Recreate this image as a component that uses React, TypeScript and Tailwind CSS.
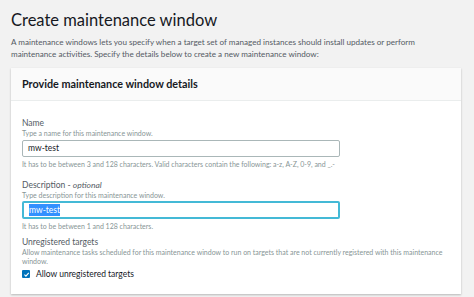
export default function App() {
  return (
    <div className="min-h-[297px] bg-[#f2f2f2] px-[11px] pt-[7px] font-['Lato',sans-serif] text-[#16191f]">
      <h1 className="text-[16.5px] leading-[26px]">Create maintenance window</h1>
      <p className="mt-[3px] text-[8.1px] leading-[12px] text-[#545b64]">
        A maintenance windows lets you specify when a target set of managed instances should install updates or perform
        <br />
        maintenance activities. Specify the details below to create a new maintenance window:
      </p>

      <div className="mt-[8px] w-[450px] bg-white shadow-[0_1px_2px_rgba(0,0,0,0.25)]">
        <div className="h-[33px] flex items-center px-[11px] bg-[#fafafa] border-b border-[#eaeded]">
          <h2 className="text-[10.8px] font-bold">Provide maintenance window details</h2>
        </div>

        <div className="px-[11px] pt-[17px] pb-[13px]">
          <div className="text-[8.5px] leading-[11px] text-[#545b64]">Name</div>
          <div className="text-[7px] leading-[9px] text-[#879596]">Type a name for this maintenance window.</div>
          <div className="mt-[2px] w-[318px] h-[17px] border border-[#aab7b8] rounded-[2px] flex items-center px-[5px] text-[8.5px]">
            mw-test
          </div>
          <div className="mt-[3px] text-[7px] leading-[9px] text-[#879596]">
            It has to be between 3 and 128 characters. Valid characters contain the following: a-z, A-Z, 0-9, and _.-
          </div>

          <div className="mt-[11px] text-[8.5px] leading-[11px] text-[#545b64]">
            Description - <i>optional</i>
          </div>
          <div className="text-[7px] leading-[9px] text-[#879596]">Type description for this maintenance window.</div>
          <div className="mt-[1px] w-[318px] h-[18px] border-2 border-[#44b9d6] rounded-[2px] flex items-center px-[5px] text-[8.5px]">
            <span className="bg-[#3390ff] text-white">mw-test</span>
          </div>
          <div className="mt-[3px] text-[7px] leading-[9px] text-[#879596]">It has to be between 1 and 128 characters.</div>

          <div className="mt-[6px] text-[8.5px] leading-[11px] text-[#545b64]">Unregistered targets</div>
          <div className="text-[7px] leading-[9px] text-[#879596]">
            Allow maintenance tasks scheduled for this maintenance window to run on targets that are not currently registered with this maintenance window.
          </div>
          <label className="mt-[2px] flex items-center gap-[6px] text-[8.5px] text-[#16191f]">
            <span className="w-[8px] h-[8px] rounded-[1px] bg-[#0073bb] flex items-center justify-center">
              <svg viewBox="0 0 10 10" className="w-[7px] h-[7px]">
                <path d="M2 5.2 L4.2 7.3 L8.2 2.8" fill="none" stroke="white" strokeWidth="1.6" />
              </svg>
            </span>
            Allow unregistered targets
          </label>
        </div>
      </div>
    </div>
  );
}
